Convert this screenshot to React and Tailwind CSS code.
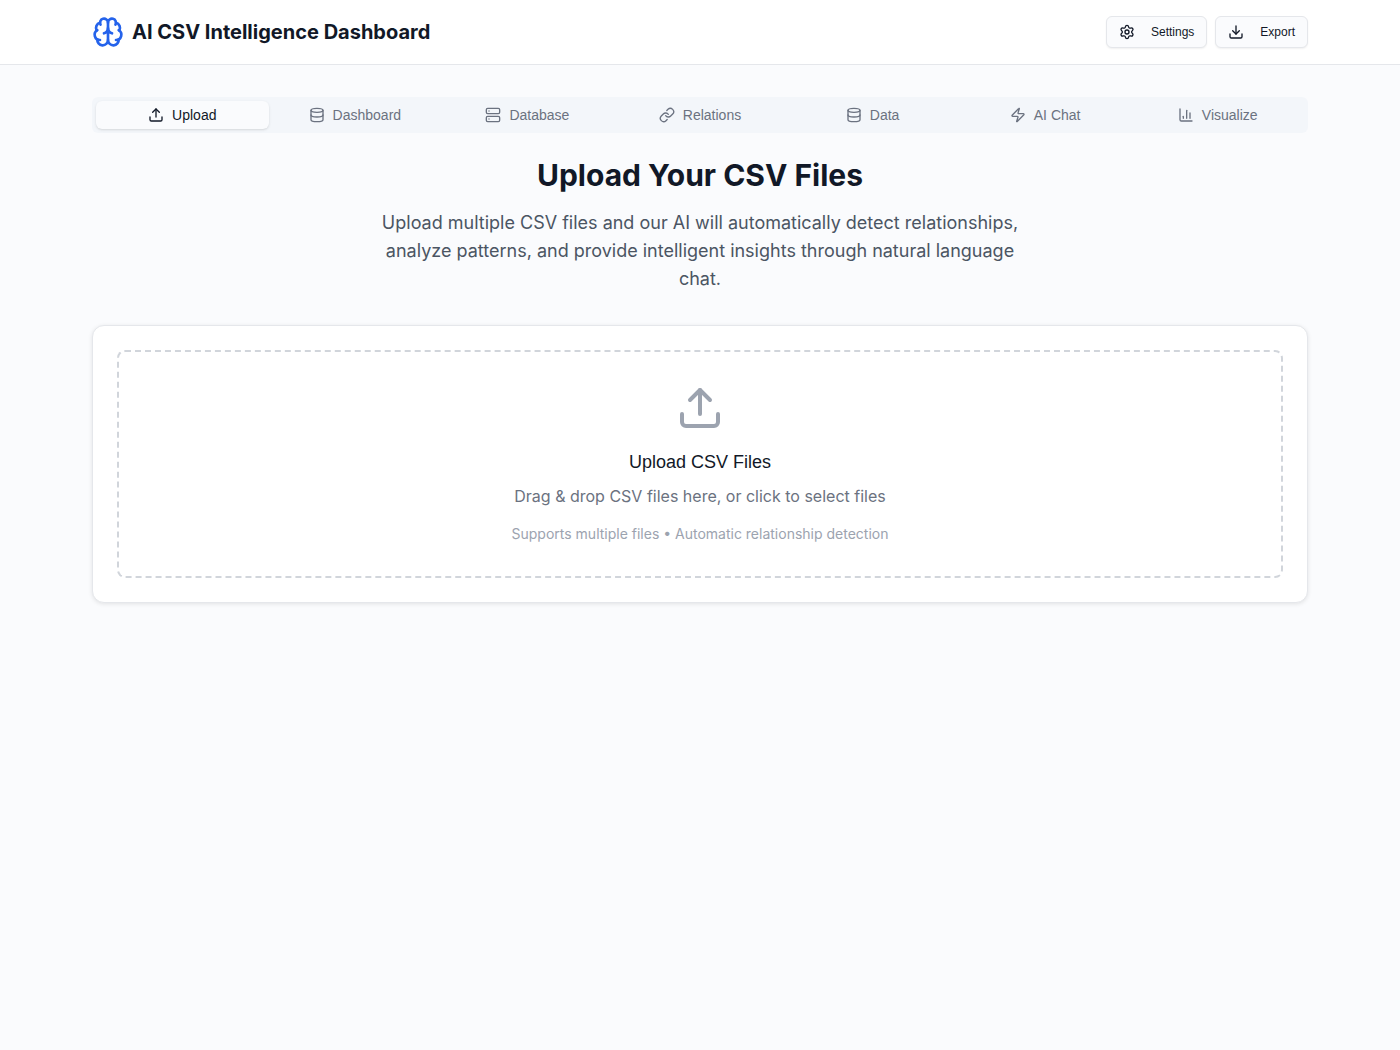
import {Brain, ChartColumn, Database, Download, Link, Server, Settings, Upload, Zap} from "lucide-react";

const tabs = [
    {label: "Upload", icon: Upload, active: true},
    {label: "Dashboard", icon: Database},
    {label: "Database", icon: Server},
    {label: "Relations", icon: Link},
    {label: "Data", icon: Database},
    {label: "AI Chat", icon: Zap},
    {label: "Visualize", icon: ChartColumn},
];

const HeaderButton = ({icon: Icon, label}) => (
    <button className="h-8 px-3 flex items-center gap-4 rounded-md border border-[#e5e7eb] bg-[#fafbfd] shadow-[0_1px_2px_rgba(0,0,0,0.06)] font-['Liberation_Sans',sans-serif] text-xs text-[#111827]">
        <Icon size={16} />
        {label}
    </button>
);

export default function App() {
    return (
        <div className="min-h-[1050px] bg-[#fafbfd] font-['Inter',sans-serif] antialiased">
            {/*Header*/}
            <header className="h-[65px] bg-white border-b border-[#e5e7eb]">
                <div className="max-w-7xl mx-auto px-8 h-full flex items-center justify-between">
                    <div className="flex items-center gap-2">
                        <Brain size={32} className="text-[#2563eb]" />
                        <h1 className="text-xl font-bold text-[#111827]">AI CSV Intelligence Dashboard</h1>
                    </div>
                    <div className="flex items-center gap-2">
                        <HeaderButton icon={Settings} label="Settings" />
                        <HeaderButton icon={Download} label="Export" />
                    </div>
                </div>
            </header>

            <main className="max-w-7xl mx-auto px-8 pt-8">
                {/*Tabs*/}
                <div className="h-9 p-1 grid grid-cols-7 rounded-md bg-[#f3f6fa]">
                    {tabs.map(({label, icon: Icon, active}) => (
                        <button
                            key={label}
                            className={`flex items-center justify-center gap-2 rounded-md font-['Liberation_Sans',sans-serif] text-sm ${active ? "bg-[#fafbfd] shadow-sm text-[#111827]" : "text-[#6b7280]"}`}
                        >
                            <Icon size={16} />
                            {label}
                        </button>
                    ))}
                </div>

                <div className="mt-6 text-center">
                    <h2 className="text-3xl font-bold text-[#111827]">Upload Your CSV Files</h2>
                    <p className="mt-4 mx-auto max-w-2xl text-lg text-[#4b5563]">
                        Upload multiple CSV files and our AI will automatically detect relationships, analyze patterns, and provide intelligent insights through natural language chat.
                    </p>
                </div>

                {/*Upload card*/}
                <div className="mt-8 p-6 rounded-xl border border-[#e5e7eb] bg-white shadow-[0_1px_4px_rgba(0,0,0,0.1)]">
                    <div className="h-[228px] pt-8 flex flex-col items-center rounded-lg border-2 border-dashed border-[#d1d5db] text-center">
                        <Upload size={48} className="text-[#9ca3af]" />
                        <h3 className="mt-4 font-['Liberation_Sans',sans-serif] text-lg text-[#111827]">Upload CSV Files</h3>
                        <p className="mt-2 text-base text-[#6b7280]">Drag &amp; drop CSV files here, or click to select files</p>
                        <p className="mt-4 text-sm text-[#9ca3af]">Supports multiple files • Automatic relationship detection</p>
                    </div>
                </div>
            </main>
        </div>
    );
}
